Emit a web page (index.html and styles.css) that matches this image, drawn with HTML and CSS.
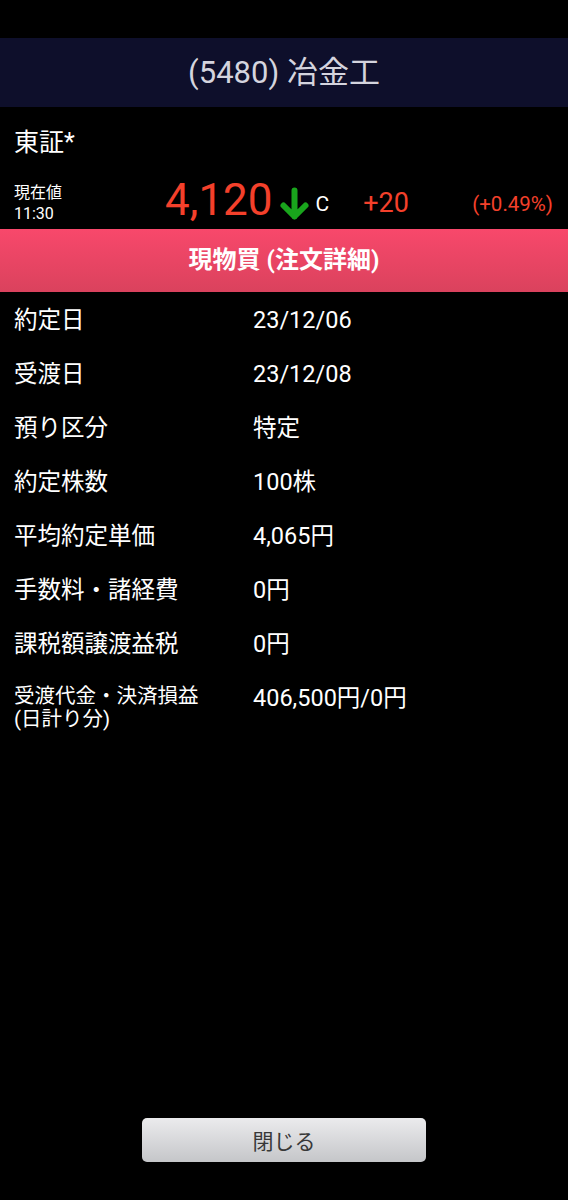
FILE: index.html
```html
<!DOCTYPE html>
<html lang="ja">
<head>
    <meta charset="UTF-8">
    <meta name="viewport" content="width=device-width, initial-scale=1.0">
    <title>注文詳細</title>
    <link rel="stylesheet" href="styles.css">
</head>
<body>
    <div class="page">
        <div class="status-gap"></div>

        <header class="title-bar">(5480) 冶金工</header>

        <div class="market">東証*</div>

        <div class="quote">
            <div class="quote-label">
                <div>現在値</div>
                <div>11:30</div>
            </div>
            <div class="price">4,120</div>
            <svg class="arrow" width="31" height="34" viewBox="0 0 31 34">
                <path d="M15.5 3.5 V29.5 M4.5 18.5 L15.5 29.5 L26.5 18.5" fill="none" stroke="#19a51c" stroke-width="6" stroke-linecap="round" stroke-linejoin="round"/>
            </svg>
            <div class="flag">C</div>
            <div class="change">+20</div>
            <div class="change-rate">(+0.49%)</div>
        </div>

        <div class="section-bar">現物買 (注文詳細)</div>

        <div class="details">
            <div class="row">
                <div class="label">約定日</div>
                <div class="value">23/12/06</div>
            </div>
            <div class="row">
                <div class="label">受渡日</div>
                <div class="value">23/12/08</div>
            </div>
            <div class="row">
                <div class="label">預り区分</div>
                <div class="value">特定</div>
            </div>
            <div class="row">
                <div class="label">約定株数</div>
                <div class="value">100株</div>
            </div>
            <div class="row">
                <div class="label">平均約定単価</div>
                <div class="value">4,065円</div>
            </div>
            <div class="row">
                <div class="label">手数料・諸経費</div>
                <div class="value">0円</div>
            </div>
            <div class="row">
                <div class="label">課税額譲渡益税</div>
                <div class="value">0円</div>
            </div>
            <div class="row row-wide">
                <div class="label label-small">受渡代金・決済損益<br>(日計り分)</div>
                <div class="value">406,500円/0円</div>
            </div>
        </div>

        <div class="footer">
            <button class="close-btn">閉じる</button>
        </div>
    </div>
</body>
</html>
```

FILE: styles.css
```css
body {
    margin: 0;
    background: #000;
    color: #fff;
    font-family: Roboto, "Noto Sans CJK JP", sans-serif;
}

.page {
    display: flex;
    flex-direction: column;
    min-height: 1200px;
}

.status-gap {
    height: 38px;
}

.title-bar {
    height: 69px;
    line-height: 69px;
    background: #0e0f2b;
    color: #d4d4de;
    font-size: 31px;
    text-align: center;
}

.market {
    height: 72px;
    line-height: 72px;
    padding: 0 14px;
    font-size: 25px;
}

/* quote line: items sit on the bottom edge, nudged by margins */
.quote {
    display: flex;
    align-items: flex-end;
    height: 50px;
    padding: 0 15px 0 14px;
}

.quote-label {
    width: 151px;
    font-size: 16px;
    line-height: 21px;
    margin-bottom: 5px;
}

.price {
    color: #f4402b;
    font-size: 44px;
    line-height: 44px;
    margin-bottom: 7px;
}

.arrow {
    margin: 0 0 8px 6px;
}

.flag {
    font-size: 21px;
    line-height: 21px;
    margin: 0 0 14px 6px;
}

.change {
    color: #f4402b;
    font-size: 27px;
    line-height: 27px;
    margin: 0 0 12px 34px;
}

.change-rate {
    color: #f4402b;
    font-size: 20.5px;
    line-height: 20px;
    margin: 0 0 15px auto;
}

.section-bar {
    height: 63px;
    line-height: 63px;
    background: linear-gradient(#f8486b, #da425d);
    font-size: 24px;
    font-weight: bold;
    text-align: center;
}

.row {
    display: flex;
    height: 54px;
    box-sizing: border-box;
    padding: 15px 14px 0;
    font-size: 23.5px;
    line-height: 26px;
}

.row-wide {
    height: auto;
}

.label {
    width: 239px;
    flex-shrink: 0;
}

.label-small {
    font-size: 20.5px;
    line-height: 23px;
}

.footer {
    margin-top: auto;
    padding-bottom: 38px;
    display: flex;
    justify-content: center;
}

.close-btn {
    width: 284px;
    height: 44px;
    border: none;
    border-radius: 5px;
    background: linear-gradient(#ebebed, #c5c6c9);
    color: #383838;
    font-family: Roboto, "Noto Sans CJK JP", sans-serif;
    font-size: 21px;
    padding: 0;
}
```
